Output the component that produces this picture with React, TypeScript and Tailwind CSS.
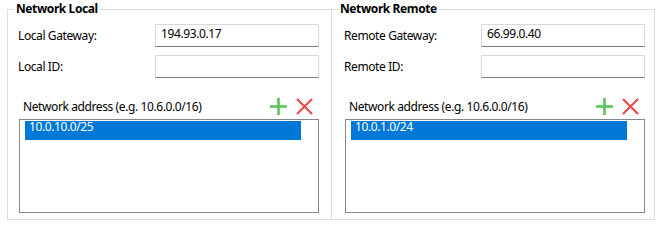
import React from "react";

function PlusIcon() {
  return (
    <svg width="17" height="17" viewBox="0 0 17 17" className="shrink-0">
      <rect x="7.2" y="0" width="2.6" height="17" fill="#5ac55a" />
      <rect x="0" y="7.2" width="17" height="2.6" fill="#5ac55a" />
    </svg>
  );
}

function CrossIcon() {
  return (
    <svg width="17" height="17" viewBox="0 0 17 17" className="shrink-0">
      <path d="M1 1 L16 16 M16 1 L1 16" stroke="#ec4b4b" strokeWidth="2.2" strokeLinecap="butt" />
    </svg>
  );
}

function Group({
  title,
  gwLabel,
  gwValue,
  idLabel,
  net,
  right,
}: {
  title: string;
  gwLabel: string;
  gwValue: string;
  idLabel: string;
  net: string;
  right?: boolean;
}) {
  return (
    <fieldset
      className={
        right
          ? "w-[323px] h-[219px] border border-l-0 border-[#dcdcdc] m-0 p-0 min-w-0"
          : "w-[325px] h-[219px] border border-[#dcdcdc] m-0 p-0 min-w-0"
      }
    >
      <legend className="ml-[6px] px-[2px] text-[12px] leading-[16px] font-bold text-black">
        {title}
      </legend>
      <div className={right ? "pl-[12px]" : "pl-[10px]"}>
        <div className="flex items-center h-[23px] mt-[7px]">
          <div className="w-[137px] text-[12px] leading-[16px] text-black">{gwLabel}</div>
          <input
            readOnly
            value={gwValue}
            className="w-[164px] h-[23px] border border-[#d9d9d9] border-b-[#7a7a7a] bg-white pl-[5px] pt-0 pb-[5px] text-[12px] leading-[16px] tracking-[-0.4px] text-black outline-none"
          />
        </div>
        <div className="flex items-center h-[23px] mt-[8px]">
          <div className="w-[137px] text-[12px] leading-[16px] text-black">{idLabel}</div>
          <input
            readOnly
            value=""
            className="w-[164px] h-[23px] border border-[#d9d9d9] border-b-[#7a7a7a] bg-white pl-[5px] pt-0 pb-[5px] text-[12px] leading-[16px] tracking-[-0.4px] text-black outline-none"
          />
        </div>
        <div className="flex items-center h-[17px] mt-[20px] w-[295px]">
          <div className="flex-1 pl-[5px] text-[12px] leading-[16px] text-black">
            Network address (e.g. 10.6.0.0/16)
          </div>
          <PlusIcon />
          <div className="w-[9px]" />
          <CrossIcon />
        </div>
        <div className="ml-[1px] mt-[4px] w-[300px] h-[94px] border border-[#828790] bg-white pt-[1px]">
          <div className="ml-[5px] w-[276px] h-[19px] bg-[#0078d7] pl-[4px] text-[12px] leading-[12px] text-white">
            {net}
          </div>
        </div>
      </div>
    </fieldset>
  );
}

export default function App() {
  return (
    <div className="w-[664px] h-[227px] bg-white pl-[7px] pt-[1px] flex tracking-[-0.4px] [font-family:'Noto_Sans','DejaVu_Sans',sans-serif]">
      <Group
        title="Network Local"
        gwLabel="Local Gateway:"
        gwValue="194.93.0.17"
        idLabel="Local ID:"
        net="10.0.10.0/25"
      />
      <Group
        title="Network Remote"
        gwLabel="Remote Gateway:"
        gwValue="66.99.0.40"
        idLabel="Remote ID:"
        net="10.0.1.0/24"
        right
      />
    </div>
  );
}
